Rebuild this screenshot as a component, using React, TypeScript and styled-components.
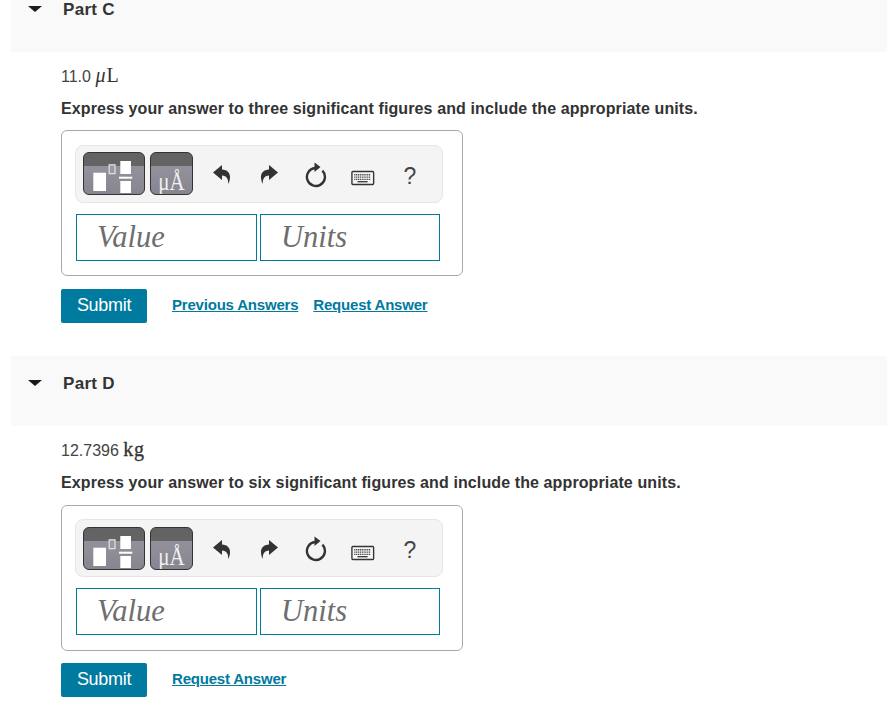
import React from 'react';
import styled, { createGlobalStyle } from 'styled-components';

const GlobalStyle = createGlobalStyle`
  html, body {
    margin: 0;
    padding: 0;
    background: #fff;
    overflow: hidden;
  }
  body {
    font-family: "Liberation Sans", Arial, sans-serif;
    color: #333;
  }
`;

const Page = styled.div`
  margin-top: -18.3px;
  padding-left: 11px;
`;
const Section = styled.section`
  padding-bottom: 33.4px;
`;
const PartHeader = styled.div`
  height: 70px;
  background: #f9f9f9;
  display: flex;
  align-items: flex-start;
  padding-top: 17px;
  box-sizing: border-box;
`;
const Caret = styled.span`
  width: 0;
  height: 0;
  margin: 7px 0 0 17px;
  border-left: 7px solid transparent;
  border-right: 7px solid transparent;
  border-top: 6px solid #1a1a1a;
`;
const PartTitle = styled.h2`
  margin: 0 0 0 21px;
  padding-top: 1px;
  font-size: 17px;
  line-height: 20px;
  letter-spacing: 0.3px;
  font-weight: 700;
  color: #333;
`;
const Body = styled.div`
  padding-left: 50px;
`;
const Given = styled.p`
  height: 20px;
  margin: 13px 0 0;
  font-size: 16px;
  line-height: 20px;
  color: #444;
`;
const MathText = styled.span`
  font-family: "Liberation Serif", "Times New Roman", serif;
  font-size: 20px;
  line-height: 1;
  letter-spacing: 1px;
  color: #333;
`;
const MathItalic = styled.i`
  font-style: italic;
`;
const MathUnit = styled.span`
  font-family: "Liberation Serif", "Times New Roman", serif;
  font-size: 20px;
  line-height: 1;
  letter-spacing: 0.6px;
  -webkit-text-stroke: 0.3px #333;
  color: #333;
`;
const Prompt = styled.p`
  margin: 14px 0 0;
  font-size: 16px;
  line-height: 20px;
  letter-spacing: 0.11px;
  font-weight: 700;
  color: #333;
`;
const AnswerBox = styled.div`
  box-sizing: border-box;
  width: 402px;
  height: 146px;
  margin-top: 11.6px;
  padding: 13.4px 0 0 13px;
  border: 1px solid #aaa;
  border-radius: 6px;
`;
const Toolbar = styled.div`
  box-sizing: border-box;
  width: 368px;
  height: 58px;
  display: flex;
  align-items: center;
  padding-left: 7px;
  background: #f4f4f4;
  border: 1px solid #e6e6e6;
  border-radius: 8px;
`;
const TemplateButton = styled.div<{ $wide?: boolean }>`
  box-sizing: border-box;
  flex: none;
  position: relative;
  width: ${(p) => (p.$wide ? '62px' : '43px')};
  height: 43px;
  margin-right: ${(p) => (p.$wide ? '5px' : '0')};
  border: 1px solid #333;
  border-radius: 6px;
  background: linear-gradient(#626262 0, #646464 13px, #92919c 13.5px, #868590 100%);
  overflow: hidden;
  display: flex;
  justify-content: center;
  align-items: flex-end;
`;
const UnitGlyph = styled.span`
  font-family: "Liberation Serif", "Times New Roman", serif;
  font-size: 21px;
  line-height: 22px;
  color: #f0f0f0;
  white-space: nowrap;
  transform: scaleY(1.2);
  transform-origin: 50% 85%;
`;
const ToolIcons = styled.div`
  display: flex;
  align-items: center;
  margin: 2px 0 0 17px;
`;
const ToolIcon = styled.span<{ $drop?: number }>`
  flex: none;
  width: 24px;
  height: 26px;
  margin-top: ${(p) => p.$drop ?? 0}px;
  margin-right: 23px;
  display: flex;
  align-items: center;
  justify-content: center;
  color: #333;
  &:last-child {
    margin-right: 0;
  }
`;
const Help = styled.span`
  font-size: 23px;
  line-height: 26px;
  color: #444;
`;
const Fields = styled.div`
  display: flex;
  gap: 3px;
  margin: 11px 0 0 1px;
`;
const Field = styled.div<{ $w: number }>`
  box-sizing: border-box;
  width: ${(p) => p.$w}px;
  height: 47px;
  padding-left: 20px;
  border: 1px solid #007a9e;
  font-family: "Liberation Serif", "Times New Roman", serif;
  font-style: italic;
  font-size: 30.5px;
  line-height: 44px;
  color: #6e6e6e;
`;
const Actions = styled.div`
  display: flex;
  align-items: center;
  margin-top: 12.4px;
`;
const Submit = styled.button`
  width: 86px;
  height: 34px;
  padding: 0 0 1px;
  margin-right: 25px;
  border: 0;
  border-radius: 2px;
  background: #007a9e;
  color: #fff;
  font-family: "Liberation Sans", Arial, sans-serif;
  font-size: 18px;
  letter-spacing: -0.3px;
`;
const ActionLink = styled.a`
  margin: 0 15px 3px 0;
  color: #007a9e;
  font-size: 15px;
  font-weight: 700;
  letter-spacing: -0.2px;
  text-decoration: underline;
`;

const FractionIcon = () => (
  <svg width="60" height="41" viewBox="0 0 60 41" style={{ position: 'absolute', left: 0, top: 0 }}>
    <rect x="9.300" y="19.700" width="12.700" height="18.300" fill="#fff" />
    <rect x="25.200" y="11.800" width="5.800" height="8.800" fill="#9a99a3" stroke="#ddd" strokeWidth="1.300" />
    <rect x="36.300" y="8" width="10.700" height="13" fill="#fff" />
    <rect x="35" y="23.700" width="13.300" height="2" fill="#fff" />
    <rect x="36.300" y="28" width="10.700" height="12" fill="#fff" />
  </svg>
);

const UndoIcon = ({ flip }: { flip?: boolean }) => (
  <svg width="18" height="19" viewBox="0 0 18 19" style={flip ? { transform: 'scaleX(-1)' } : undefined}>
    <path
      fill="currentColor"
      d="M0 7.500 9 0v4.500c5 0 8.500 3.500 8 8.500-.2 2.500-1 4.500-1.800 6 .3-5-1.700-8.500-6.200-8.500V15z"
    />
  </svg>
);

const ResetIcon = () => (
  <svg width="24" height="26" viewBox="0 0 24 26">
    <path d="M11 6A9 9 0 1 0 18.400 8.700" fill="none" stroke="currentColor" strokeWidth="2.400" />
    <path d="M10.500.5 16.500 5l-6 5z" fill="currentColor" />
  </svg>
);

const KeyboardIcon = () => (
  <svg width="26" height="16" viewBox="0 0 26 16">
    <rect x="1" y="1" width="23.500" height="14" rx="1" fill="#f7f7f7" stroke="#333" strokeWidth="1.500" />
    <path d="M3.500 4.500h18M3.500 7h18M3.500 9.500h18" stroke="#444" strokeWidth="1.400" strokeDasharray="1.300 .7" />
    <path d="M7 12h11" stroke="#333" strokeWidth="1.400" />
  </svg>
);

type PartProps = {
  title: string;
  given: React.ReactNode;
  prompt: string;
  links: string[];
};

const Part = ({ title, given, prompt, links }: PartProps) => (
  <Section>
    <PartHeader>
      <Caret />
      <PartTitle>{title}</PartTitle>
    </PartHeader>
    <Body>
      <Given>{given}</Given>
      <Prompt>{prompt}</Prompt>
      <AnswerBox>
        <Toolbar>
          <TemplateButton $wide>
            <FractionIcon />
          </TemplateButton>
          <TemplateButton>
            <UnitGlyph>μÅ</UnitGlyph>
          </TemplateButton>
          <ToolIcons>
            <ToolIcon>
              <UndoIcon />
            </ToolIcon>
            <ToolIcon>
              <UndoIcon flip />
            </ToolIcon>
            <ToolIcon>
              <ResetIcon />
            </ToolIcon>
            <ToolIcon $drop={7}>
              <KeyboardIcon />
            </ToolIcon>
            <ToolIcon $drop={2}>
              <Help>?</Help>
            </ToolIcon>
          </ToolIcons>
        </Toolbar>
        <Fields>
          <Field $w={181}>Value</Field>
          <Field $w={180}>Units</Field>
        </Fields>
      </AnswerBox>
      <Actions>
        <Submit>Submit</Submit>
        {links.map((link) => (
          <ActionLink key={link}>{link}</ActionLink>
        ))}
      </Actions>
    </Body>
  </Section>
);

export default function App() {
  return (
    <>
      <GlobalStyle />
      <Page>
        <Part
          title="Part C"
          given={
            <>
              11.0{' '}
              <MathText>
                <MathItalic>μ</MathItalic>L
              </MathText>
            </>
          }
          prompt="Express your answer to three significant figures and include the appropriate units."
          links={['Previous Answers', 'Request Answer']}
        />
        <Part
          title="Part D"
          given={
            <>
              12.7396 <MathUnit>kg</MathUnit>
            </>
          }
          prompt="Express your answer to six significant figures and include the appropriate units."
          links={['Request Answer']}
        />
      </Page>
    </>
  );
}
